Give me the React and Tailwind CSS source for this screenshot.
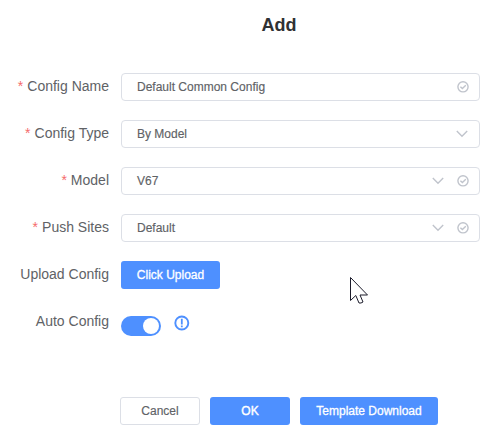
import React, { useState } from 'react';

function CheckIcon() {
  return (
    <svg className="w-3 h-3" viewBox="0 0 12 12" fill="none" stroke="#c0c4cc" strokeWidth="1.4">
      <circle cx="6" cy="5.8" r="5.1" />
      <path d="M3.4 5.7 5.4 7.6 8.8 4.2" />
    </svg>
  );
}

function ArrowIcon() {
  return (
    <svg className="w-3 h-3" viewBox="0 0 12 12" fill="none" stroke="#c0c4cc" strokeWidth="1.4">
      <path d="M0.8 3 6 8.2 11.2 3" />
    </svg>
  );
}

function FormRow({ label, required, children }) {
  return (
    <div className="flex h-7 mb-[19px]">
      <label className="w-[109px] mr-3 text-right text-sm leading-[27px] text-[#606266] whitespace-nowrap">
        {required && <span className="text-[#f56c6c] mr-1">*</span>}
        {label}
      </label>
      {children}
    </div>
  );
}

function Field({ value, arrow, valid }) {
  return (
    <div className="flex items-center w-[359px] h-7 pl-[15px] pr-2.5 border border-[#dcdfe6] rounded text-xs text-[#606266] [-webkit-text-stroke:0.15px]">
      <span className="flex-1">{value}</span>
      {arrow && <span className={valid ? 'mr-[13.5px]' : 'mr-px'}><ArrowIcon /></span>}
      {valid && <CheckIcon />}
    </div>
  );
}

export default function App() {
  const [autoConfig, setAutoConfig] = useState(true);

  return (
    <div className="relative w-[500px] h-[441px] overflow-hidden bg-white font-['Liberation_Sans',sans-serif]">
      <h2 className="h-[73px] pt-[11px] pl-[58px] text-center text-lg leading-7 font-bold text-[#303133]">Add</h2>
      <FormRow label="Config Name" required>
        <Field value="Default Common Config" valid />
      </FormRow>
      <FormRow label="Config Type" required>
        <Field value="By Model" arrow />
      </FormRow>
      <FormRow label="Model" required>
        <Field value="V67" arrow valid />
      </FormRow>
      <FormRow label="Push Sites" required>
        <Field value="Default" arrow valid />
      </FormRow>
      <FormRow label="Upload Config">
        <button className="w-[99px] h-7 rounded-[3px] bg-[#4e90ff] text-white text-xs font-medium [-webkit-text-stroke:0.3px]">Click Upload</button>
      </FormRow>
      <FormRow label="Auto Config">
        <button
          onClick={() => setAutoConfig(!autoConfig)}
          className={`flex w-10 h-5 mt-2 p-0.5 rounded-full ${autoConfig ? 'justify-end bg-[#4e90ff]' : 'bg-[#dcdfe6]'}`}
        >
          <span className="w-4 h-4 rounded-full bg-white" />
        </button>
        <svg className="w-4 h-4 ml-[13px] mt-[7px]" viewBox="0 0 16 16" fill="none" stroke="#4e90ff">
          <circle cx="7.8" cy="8" r="6.5" strokeWidth="1.9" />
          <path d="M7.8 3.8V9.4M7.8 10.4V12.2" strokeWidth="1.8" />
        </svg>
      </FormRow>
      <div className="flex gap-2.5 pl-[120px] pt-[42px] text-xs font-medium">
        <button className="w-20 h-7 rounded-[3px] border border-[#dcdfe6] text-[#606266] [-webkit-text-stroke:0.15px]">Cancel</button>
        <button className="w-20 h-7 rounded-[3px] bg-[#4e90ff] text-white [-webkit-text-stroke:0.4px]">OK</button>
        <button className="w-[138px] h-7 rounded-[3px] bg-[#4e90ff] text-white [-webkit-text-stroke:0.3px]">Template Download</button>
      </div>
      <svg className="absolute left-[350px] top-[276px] w-5 h-7" viewBox="0 0 20 28" fill="white" stroke="#1c1c2b">
        <path d="M0.5 1.5V24.5L5.8 19.5L9 27H11L13 26L10 19H17.5Z" />
      </svg>
    </div>
  );
}
